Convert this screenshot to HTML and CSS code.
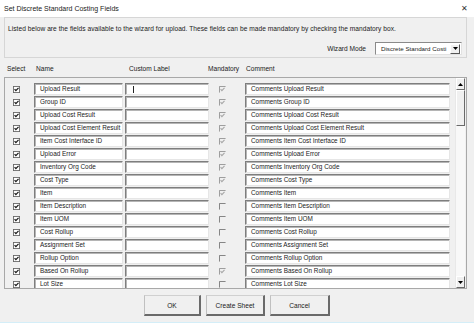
FILE: index.html
```html
<!DOCTYPE html>
<html>
<head>
<meta charset="utf-8">
<link rel="stylesheet" href="styles.css">
</head>
<body>
<svg class="defs" width="0" height="0">
  <defs>
    <symbol id="sel" viewBox="0 0 8 8">
      <rect x="0.5" y="0.5" width="7" height="7" fill="#fff" stroke="#666"/>
      <path d="M1.8 3.6 L3.3 5.3 L6.3 2.1" stroke="#1a1a1a" stroke-width="1.4" fill="none"/>
    </symbol>
    <symbol id="mon" viewBox="0 0 8 8">
      <path d="M0.5 7.5 V0.5 H7.5" stroke="#8c8c8c" fill="none"/>
      <path d="M1.8 3.6 L3.3 5.3 L6.3 2.1" stroke="#a6a6a6" stroke-width="1.2" fill="none"/>
    </symbol>
    <symbol id="moff" viewBox="0 0 8 8">
      <path d="M0.5 7.5 V0.5 H7.5" stroke="#6e6e6e" fill="none"/>
    </symbol>
  </defs>
</svg>
<div class="window">
  <div class="titlebar">
    <span class="title">Set Discrete Standard Costing Fields</span>
    <span class="close">✕</span>
  </div>
  <div class="group">
    <div class="intro">Listed below are the fields available to the wizard for upload. These fields can be made mandatory by checking the mandatory box.</div>
    <div class="mode">
      <span class="mode-label">Wizard Mode</span>
      <div class="combo">
        <span class="combo-text">Discrete Standard Costi</span>
        <span class="combo-btn"><svg width="5" height="3" viewBox="0 0 5 3"><path d="M0 0 H5 L2.5 3 Z" fill="#000"/></svg></span>
      </div>
    </div>
  </div>
  <div class="headers">
    <span class="h-select">Select</span>
    <span class="h-name">Name</span>
    <span class="h-label">Custom Label</span>
    <span class="h-mand">Mandatory</span>
    <span class="h-comment">Comment</span>
  </div>
  <div class="list">
    <div class="rows">
      <div class="row"><svg class="cb"><use href="#sel"/></svg><div class="box">Upload Result</div><div class="box lbl"><span class="caret"></span></div><svg class="cb mand"><use href="#mon"/></svg><div class="box">Comments Upload Result</div></div>
      <div class="row"><svg class="cb"><use href="#sel"/></svg><div class="box">Group ID</div><div class="box lbl"></div><svg class="cb mand"><use href="#mon"/></svg><div class="box">Comments Group ID</div></div>
      <div class="row"><svg class="cb"><use href="#sel"/></svg><div class="box">Upload Cost Result</div><div class="box lbl"></div><svg class="cb mand"><use href="#mon"/></svg><div class="box">Comments Upload Cost Result</div></div>
      <div class="row"><svg class="cb"><use href="#sel"/></svg><div class="box">Upload Cost Element Result</div><div class="box lbl"></div><svg class="cb mand"><use href="#mon"/></svg><div class="box">Comments Upload Cost Element Result</div></div>
      <div class="row"><svg class="cb"><use href="#sel"/></svg><div class="box">Item Cost Interface ID</div><div class="box lbl"></div><svg class="cb mand"><use href="#mon"/></svg><div class="box">Comments Item Cost Interface ID</div></div>
      <div class="row"><svg class="cb"><use href="#sel"/></svg><div class="box">Upload Error</div><div class="box lbl"></div><svg class="cb mand"><use href="#mon"/></svg><div class="box">Comments Upload Error</div></div>
      <div class="row"><svg class="cb"><use href="#sel"/></svg><div class="box">Inventory Org Code</div><div class="box lbl"></div><svg class="cb mand"><use href="#mon"/></svg><div class="box">Comments Inventory Org Code</div></div>
      <div class="row"><svg class="cb"><use href="#sel"/></svg><div class="box">Cost Type</div><div class="box lbl"></div><svg class="cb mand"><use href="#mon"/></svg><div class="box">Comments Cost Type</div></div>
      <div class="row"><svg class="cb"><use href="#sel"/></svg><div class="box">Item</div><div class="box lbl"></div><svg class="cb mand"><use href="#mon"/></svg><div class="box">Comments Item</div></div>
      <div class="row"><svg class="cb"><use href="#sel"/></svg><div class="box">Item Description</div><div class="box lbl"></div><svg class="cb mand"><use href="#moff"/></svg><div class="box">Comments Item Description</div></div>
      <div class="row"><svg class="cb"><use href="#sel"/></svg><div class="box">Item UOM</div><div class="box lbl"></div><svg class="cb mand"><use href="#moff"/></svg><div class="box">Comments Item UOM</div></div>
      <div class="row"><svg class="cb"><use href="#sel"/></svg><div class="box">Cost Rollup</div><div class="box lbl"></div><svg class="cb mand"><use href="#moff"/></svg><div class="box">Comments Cost Rollup</div></div>
      <div class="row"><svg class="cb"><use href="#sel"/></svg><div class="box">Assignment Set</div><div class="box lbl"></div><svg class="cb mand"><use href="#moff"/></svg><div class="box">Comments Assignment Set</div></div>
      <div class="row"><svg class="cb"><use href="#sel"/></svg><div class="box">Rollup Option</div><div class="box lbl"></div><svg class="cb mand"><use href="#moff"/></svg><div class="box">Comments Rollup Option</div></div>
      <div class="row"><svg class="cb"><use href="#sel"/></svg><div class="box">Based On Rollup</div><div class="box lbl"></div><svg class="cb mand"><use href="#mon"/></svg><div class="box">Comments Based On Rollup</div></div>
      <div class="row"><svg class="cb"><use href="#sel"/></svg><div class="box">Lot Size</div><div class="box lbl"></div><svg class="cb mand"><use href="#moff"/></svg><div class="box">Comments Lot Size</div></div>
    </div>
    <div class="scrollbar">
      <div class="sb-btn"><svg width="5" height="3" viewBox="0 0 5 3"><path d="M0 3 H5 L2.5 0 Z" fill="#000"/></svg></div>
      <div class="sb-thumb"></div>
      <div class="sb-track"></div>
      <div class="sb-btn"><svg width="5" height="3" viewBox="0 0 5 3"><path d="M0 0 H5 L2.5 3 Z" fill="#000"/></svg></div>
    </div>
  </div>
  <div class="buttons">
    <div class="btn b-ok">OK</div>
    <div class="btn b-create">Create Sheet</div>
    <div class="btn b-cancel">Cancel</div>
  </div>
</div>
</body>
</html>
```
FILE: styles.css
```css
* { box-sizing: border-box; }
html, body { margin: 0; padding: 0; }
body {
  width: 474px;
  height: 323px;
  overflow: hidden;
  background: #f0f0f0;
  font-family: "Liberation Sans", Arial, sans-serif;
  font-size: 6.6px;
  color: #1a1a1a;
}
.defs { position: absolute; width: 0; height: 0; }
.window {
  width: 474px;
  height: 323px;
  display: flex;
  flex-direction: column;
  border-bottom: 1px solid #d4eef8;
}
.titlebar {
  height: 17px;
  background: #ffffff;
  display: flex;
  align-items: center;
  justify-content: space-between;
  padding: 0 6px 0 4px;
  flex: none;
}
.title { font-size: 7px; }
.close { font-size: 8px; color: #333; }
.group {
  margin-left: 4px;
  width: 463px;
  height: 41px;
  border: 1px solid #d6d6d6;
  flex: none;
  display: flex;
  flex-direction: column;
  justify-content: space-between;
  padding: 7px 4px 2px 3px;
}
.intro { line-height: 8px; letter-spacing: 0.05px; }
.mode {
  display: flex;
  justify-content: flex-end;
  align-items: center;
  gap: 9px;
}
.combo {
  width: 87px;
  height: 13px;
  background: #fff;
  border-top: 1px solid #8a8a8a;
  border-left: 1px solid #8a8a8a;
  border-right: 1px solid #e2e2e2;
  border-bottom: 1px solid #e2e2e2;
  display: flex;
  align-items: center;
  justify-content: space-between;
  padding-left: 5px;
}
.combo-text {
  white-space: nowrap;
  font-size: 6.2px;
  flex: 1;
  min-width: 0;
}
.combo-btn {
  width: 10px;
  height: 10px;
  flex: none;
  margin-right: 1px;
  background: #f0f0f0;
  border-top: 1px solid #fff;
  border-left: 1px solid #fff;
  border-right: 1px solid #555;
  border-bottom: 1px solid #555;
  display: flex;
  align-items: center;
  justify-content: center;
}
.headers {
  height: 19px;
  flex: none;
  display: grid;
  grid-template-columns: 30px 89px 86px 36px 205px;
  align-items: end;
  padding-bottom: 5px;
  padding-left: 5px;
}
.h-select { padding-left: 2px; }
.h-name { padding-left: 1px; }
.h-label { padding-left: 5px; }
.h-mand { margin-left: -2px; }
.h-comment { padding-left: 0; }
.list {
  margin-left: 4px;
  width: 463px;
  height: 212px;
  flex: none;
  border: 1px solid #a8a8a8;
  display: flex;
  overflow: hidden;
}
.rows {
  flex: 1;
  padding-top: 5px;
  overflow: hidden;
}
.row {
  display: grid;
  grid-template-columns: 29px 89px 86px 36px 205px;
  height: 13px;
  align-items: start;
}
.cb {
  width: 7px;
  height: 7px;
  margin: 3px 0 0 8px;
}
.cb.mand { margin-left: 10px; }
.box {
  height: 12px;
  background: #fff;
  border-top: 1px solid #7e7e7e;
  border-left: 1px solid #7e7e7e;
  border-right: 1px solid #e6e6e6;
  border-bottom: 1px solid #e6e6e6;
  box-shadow: inset 1px 1px 0 #b5b5b5;
  padding-left: 5px;
  font-size: 6.4px;
  line-height: 10px;
  white-space: nowrap;
  overflow: hidden;
}
.box.lbl { margin-left: 2px; }
.caret {
  display: inline-block;
  width: 1px;
  height: 7px;
  background: #222;
  margin-left: 2px;
  vertical-align: middle;
}
.scrollbar {
  width: 10px;
  margin-right: 1px;
  display: flex;
  flex-direction: column;
  border-left: 1px solid #e8e8e8;
  background: #f7f7f7;
}
.sb-btn {
  height: 12px;
  flex: none;
  background: #f0f0f0;
  border-top: 1px solid #fff;
  border-left: 1px solid #fff;
  border-right: 1px solid #6a6a6a;
  border-bottom: 1px solid #6a6a6a;
  display: flex;
  align-items: center;
  justify-content: center;
}
.sb-thumb {
  height: 36px;
  flex: none;
  background: #f0f0f0;
  border-top: 1px solid #fff;
  border-left: 1px solid #fff;
  border-right: 1px solid #6a6a6a;
  border-bottom: 1px solid #6a6a6a;
}
.sb-track { flex: 1; background: #f8f8f8; }
.buttons {
  display: flex;
  justify-content: center;
  gap: 5px;
  margin-top: 6px;
  flex: none;
}
.btn {
  height: 21px;
  display: flex;
  align-items: center;
  justify-content: center;
  background: #f0f0f0;
  border-top: 1px solid #d0d0d0;
  border-left: 1px solid #c0c0c0;
  border-right: 2px solid #6a6a6a;
  border-bottom: 2px solid #6a6a6a;
}
.b-ok { width: 57px; }
.b-create { width: 59px; }
.b-cancel { width: 60px; }
```
